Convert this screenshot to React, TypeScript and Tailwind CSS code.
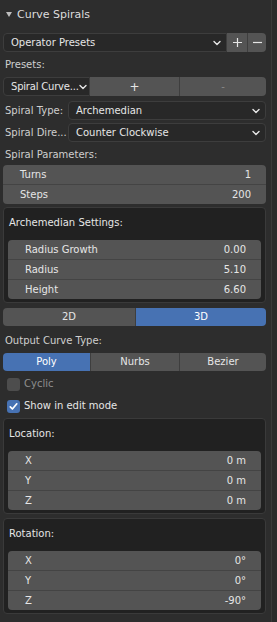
import React from "react";

const Chevron = () => (
  <svg width="8" height="6" viewBox="0 0 8 6" className="shrink-0">
    <path d="M1 1.5 L4 4.5 L7 1.5" fill="none" stroke="#e6e6e6" strokeWidth="1.4" strokeLinecap="round" strokeLinejoin="round" />
  </svg>
);

function Dropdown({ text, className = "", textClass = "" }: { text: string; className?: string; textClass?: string }) {
  return (
    <div className={`flex h-full items-center justify-between rounded-[4px] border border-[#3d3d3d] bg-[#282828] pl-[7px] pr-[5px] text-[#e6e6e6] ${className}`}>
      <span className={`whitespace-nowrap ${textClass}`}>{text}</span>
      <Chevron />
    </div>
  );
}

function Label({ text, className = "" }: { text: string; className?: string }) {
  return <div className={`flex h-[20px] items-center pl-[2px] text-[#cfcfcf] ${className}`}>{text}</div>;
}

type Field = { name: string; value: string };

function Fields({ rows }: { rows: Field[] }) {
  return (
    <div className="flex flex-col overflow-hidden rounded-[4px] bg-[#545454]">
      {rows.map((r, i) => (
        <div
          key={r.name}
          className={`flex items-center justify-between pl-[17px] pr-[15px] text-[#e6e6e6] ${i > 0 ? "h-[20px] border-t border-[#444444]" : "h-[19px]"}`}
        >
          <span>{r.name}</span>
          <span>{r.value}</span>
        </div>
      ))}
    </div>
  );
}

function Box({ title, rows, className = "" }: { title: string; rows: Field[]; className?: string }) {
  return (
    <div className={`rounded-[4px] border border-[#3a3a3a] bg-[#212121] px-[4px] pt-[5px] pb-[3px] ${className}`}>
      <div className="flex h-[20px] items-center pl-[1px] text-[#e6e6e6]">{title}</div>
      <div className="mt-[7px]">
        <Fields rows={rows} />
      </div>
    </div>
  );
}

function Segmented({ items, active, className = "", widths }: { items: string[]; active: number; className?: string; widths: string[] }) {
  return (
    <div className={`flex h-[18px] overflow-hidden rounded-[4px] ${className}`}>
      {items.map((it, i) => (
        <div
          key={it}
          className={`flex h-full items-center justify-center ${widths[i]} ${i > 0 ? "border-l border-[#3e3e3e]" : ""} ${i === active ? "bg-[#4772b3] text-white" : "bg-[#545454] text-[#e6e6e6]"}`}
        >
          {it}
        </div>
      ))}
    </div>
  );
}

function Checkbox({ label, checked, dim }: { label: string; checked?: boolean; dim?: boolean }) {
  return (
    <div className="flex h-[18px] items-center pl-[4px]">
      <div className={`flex h-[13px] w-[13px] items-center justify-center rounded-[3px] ${checked ? "bg-[#4772b3]" : "bg-[#4d4d4d]"}`}>
        {checked && (
          <svg width="11" height="11" viewBox="0 0 11 11">
            <path d="M2.3 5.8 L4.4 8 L8.8 2.8" fill="none" stroke="#ffffff" strokeWidth="1.7" strokeLinecap="round" strokeLinejoin="round" />
          </svg>
        )}
      </div>
      <span className={`ml-[4px] ${dim ? "text-[#8e8e8e]" : "text-[#e6e6e6]"}`}>{label}</span>
    </div>
  );
}

export default function App() {
  return (
    <div className="flex h-[622px] w-[277px] bg-[#2b2b2b] font-['DejaVu_Sans',sans-serif] text-[10px] leading-none">
      <div className="h-full w-[272px] border-r border-[#3a3a3a] bg-[#2d2d2d]">
        {/* header */}
        <div className="flex h-[28px] items-center pl-[6px] text-[#dcdcdc]">
          <svg width="6" height="5" viewBox="0 0 6 5">
            <path d="M0 0 L6 0 L3 5 Z" fill="#bdbdbd" />
          </svg>
          <span className="ml-[5px] text-[11px]">Curve Spirals</span>
        </div>

        <div className="flex flex-col pl-[3px] pr-[5px]">
          {/* operator presets */}
          <div className="mt-[5px] flex h-[19px]">
            <Dropdown text="Operator Presets" className="w-[224px] rounded-r-none" />
            <div className="flex w-[20px] items-center justify-center bg-[#545454]">
              <svg width="11" height="11" viewBox="0 0 11 11">
                <path d="M5.5 1 V10 M1 5.5 H10" stroke="#e6e6e6" strokeWidth="1.2" />
              </svg>
            </div>
            <div className="flex w-[19px] items-center justify-center rounded-r-[4px] border-l border-[#3e3e3e] bg-[#545454]">
              <svg width="11" height="11" viewBox="0 0 11 11">
                <path d="M1 5.5 H10" stroke="#e6e6e6" strokeWidth="1.2" />
              </svg>
            </div>
          </div>

          <Label text="Presets:" className="mt-[3px]" />

          <div className="mt-[2px] flex h-[19px]">
            <Dropdown text="Spiral Curve..." className="w-[87px] rounded-r-none pr-[3px]" textClass="tracking-[-0.2px]" />
            <div className="flex w-[89px] items-center justify-center bg-[#545454] text-[12px] text-[#e6e6e6]">+</div>
            <div className="flex flex-1 items-center justify-center rounded-r-[4px] border-l border-[#3e3e3e] bg-[#545454] text-[#8a8a8a]">-</div>
          </div>

          <div className="mt-[5px] flex h-[19px] items-center">
            <div className="w-[65px] whitespace-nowrap pl-[2px] text-[#cfcfcf]">Spiral Type:</div>
            <Dropdown text="Archemedian" className="flex-1" />
          </div>
          <div className="mt-[3px] flex h-[19px] items-center">
            <div className="w-[65px] whitespace-nowrap pl-[2px] text-[#cfcfcf]">Spiral Dire...</div>
            <Dropdown text="Counter Clockwise" className="flex-1" />
          </div>

          <Label text="Spiral Parameters:" className="mt-[3px]" />
          <Fields
            rows={[
              { name: "Turns", value: "1" },
              { name: "Steps", value: "200" },
            ]}
          />

          <Box
            title="Archemedian Settings:"
            className="mt-[3px]"
            rows={[
              { name: "Radius Growth", value: "0.00" },
              { name: "Radius", value: "5.10" },
              { name: "Height", value: "6.60" },
            ]}
          />

          <Segmented className="mt-[5px]" items={["2D", "3D"]} active={1} widths={["w-[132px]", "flex-1"]} />

          <Label text="Output Curve Type:" className="mt-[5px]" />
          <Segmented className="mt-[2px]" items={["Poly", "Nurbs", "Bezier"]} active={0} widths={["w-[87px]", "w-[89px]", "flex-1"]} />

          <div className="mt-[4px]">
            <Checkbox label="Cyclic" dim />
          </div>
          <div className="mt-[4px]">
            <Checkbox label="Show in edit mode" checked />
          </div>

          <Box
            title="Location:"
            className="mt-[3px]"
            rows={[
              { name: "X", value: "0 m" },
              { name: "Y", value: "0 m" },
              { name: "Z", value: "0 m" },
            ]}
          />
          <Box
            title="Rotation:"
            className="mt-[4px]"
            rows={[
              { name: "X", value: "0°" },
              { name: "Y", value: "0°" },
              { name: "Z", value: "-90°" },
            ]}
          />
        </div>
      </div>
    </div>
  );
}
